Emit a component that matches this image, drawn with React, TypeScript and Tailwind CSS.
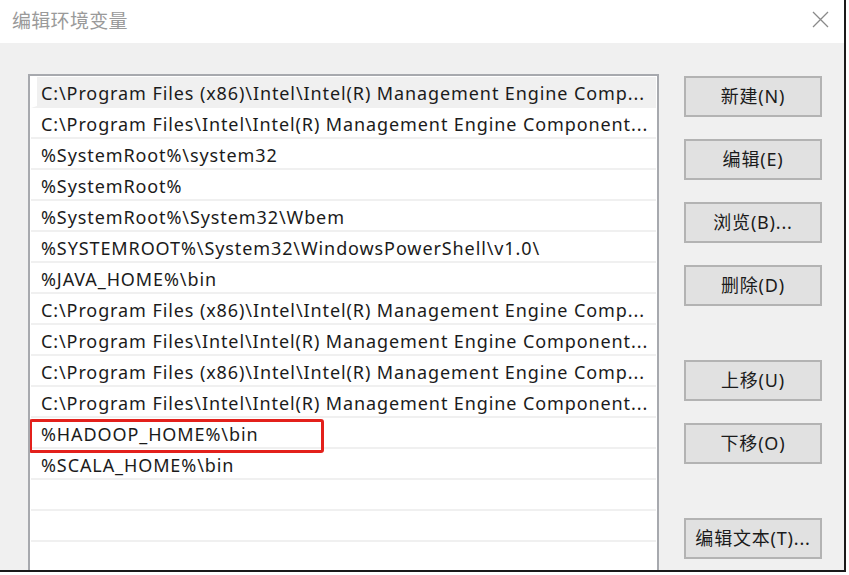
import React from "react";

const rows = [
  "C:\\Program Files (x86)\\Intel\\Intel(R) Management Engine Comp...",
  "C:\\Program Files\\Intel\\Intel(R) Management Engine Component...",
  "%SystemRoot%\\system32",
  "%SystemRoot%",
  "%SystemRoot%\\System32\\Wbem",
  "%SYSTEMROOT%\\System32\\WindowsPowerShell\\v1.0\\",
  "%JAVA_HOME%\\bin",
  "C:\\Program Files (x86)\\Intel\\Intel(R) Management Engine Comp...",
  "C:\\Program Files\\Intel\\Intel(R) Management Engine Component...",
  "C:\\Program Files (x86)\\Intel\\Intel(R) Management Engine Comp...",
  "C:\\Program Files\\Intel\\Intel(R) Management Engine Component...",
  "%HADOOP_HOME%\\bin",
  "%SCALA_HOME%\\bin",
  "",
  "",
  "",
];

const font = {
  fontFamily: '"Noto Sans", "Noto Sans CJK SC", sans-serif',
};

function Btn({ label, className = "" }: { label: string; className?: string }) {
  return (
    <div
      className={`flex h-[41px] w-[138px] items-center justify-center whitespace-nowrap border-2 border-[#b3b3b3] bg-[#e1e1e1] text-[18px] tracking-[0.8px] text-[#1b1b1b] ${className}`}
    >
      {label}
    </div>
  );
}

export default function App() {
  return (
    <div className="h-[575px] w-[849px] overflow-hidden bg-white" style={font}>
      <div className="flex h-[572px] w-[846px] flex-col border-b-2 border-r-2 border-[#1a1a1a]">
        <div className="flex h-[43px] shrink-0 items-center justify-between bg-white pl-[12px] pr-[15px]">
          <span className="text-[19px] tracking-[0.3px] text-[#9a9a9a]">编辑环境变量</span>
          <svg width="17" height="17" viewBox="0 0 17 17" className="mb-[4px]">
            <path d="M1 1L16 16M16 1L1 16" stroke="#8a8a8a" strokeWidth="1.3" fill="none" />
          </svg>
        </div>
        <div className="flex flex-1 items-start overflow-hidden bg-[#f0f0f0] pl-[28px] pt-[31px]">
          <div className="h-[520px] w-[631px] shrink-0 overflow-hidden border-2 border-[#a7a9ae] bg-white pt-[1px]">
            {rows.map((r, i) => (
              <div
                key={i}
                className={`relative ml-px mr-px flex h-[31px] items-center whitespace-nowrap border-b-2 border-[#f0f0f0] pt-[3px] text-[18px] tracking-[0.9px] text-[#1b1b1b] ${
                  i === 0 ? "border-l-[6px] border-l-white bg-[#f0f0f0] pl-[4px]" : "pl-[10px]"
                }`}
              >
                <span className="overflow-hidden">{r}</span>
                {i === 11 && (
                  <span className="pointer-events-none absolute left-[-2px] top-[1px] h-[34px] w-[295px] rounded-[3px] border-[3px] border-[#e3201b]" />
                )}
              </div>
            ))}
          </div>
          <div className="ml-[25px] mt-[2px] flex flex-col">
            <Btn label="新建(N)" />
            <Btn label="编辑(E)" className="mt-[22px]" />
            <Btn label="浏览(B)..." className="mt-[22px]" />
            <Btn label="删除(D)" className="mt-[22px]" />
            <Btn label="上移(U)" className="mt-[54px]" />
            <Btn label="下移(O)" className="mt-[22px]" />
            <Btn label="编辑文本(T)..." className="mt-[54px]" />
          </div>
        </div>
      </div>
    </div>
  );
}
